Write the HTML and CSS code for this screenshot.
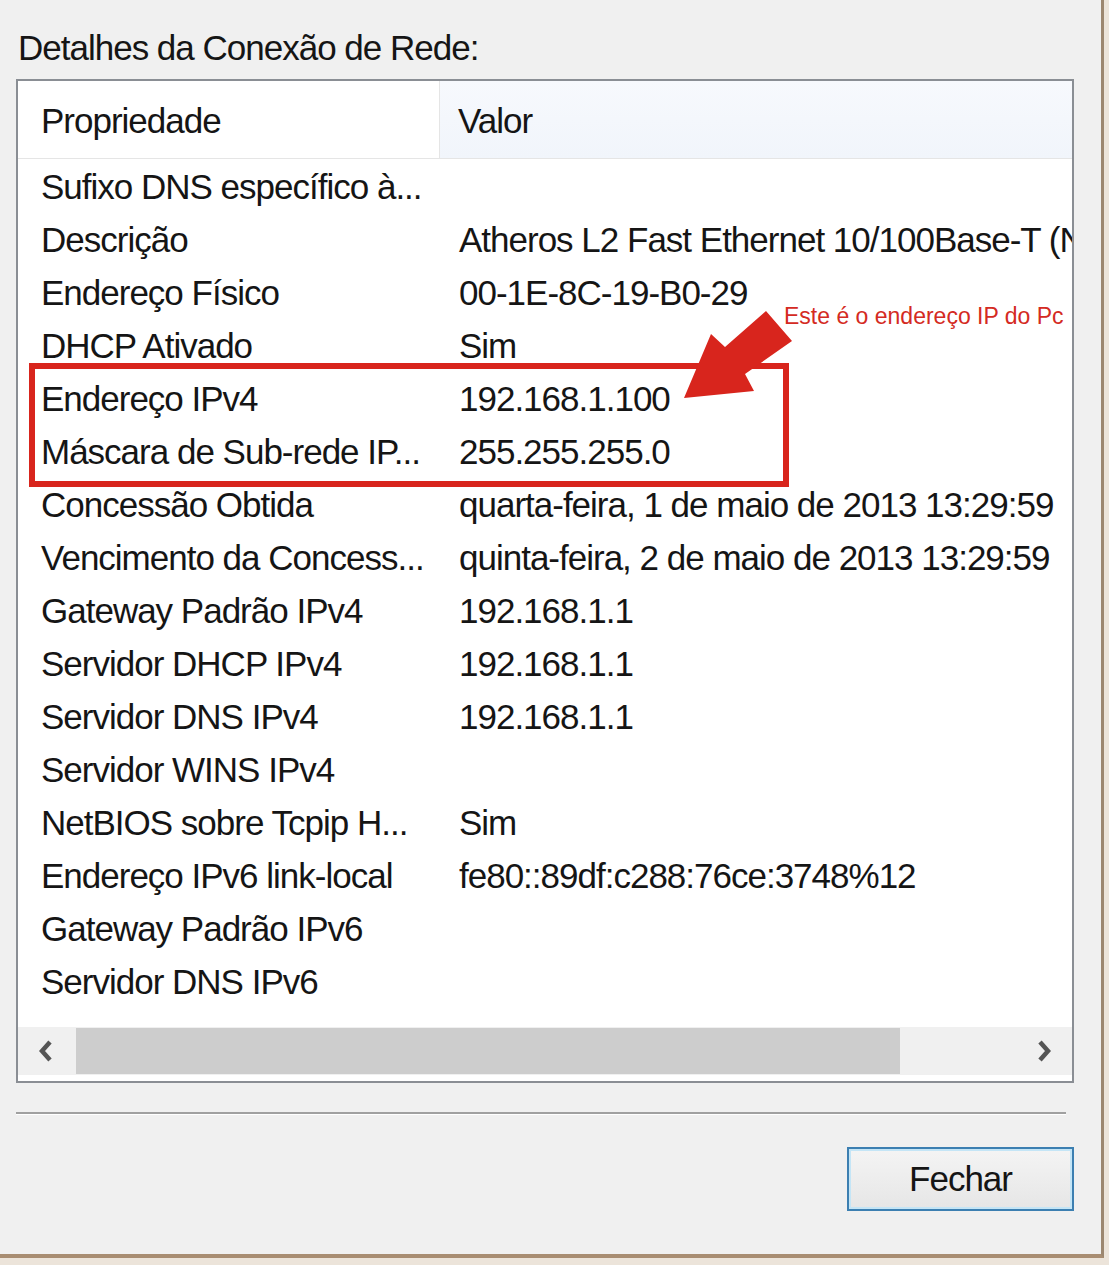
FILE: index.html
```html
<!DOCTYPE html>
<html lang="pt">
<head>
    <meta charset="UTF-8">
    <meta name="viewport" content="width=device-width, initial-scale=1.0">
    <title>Detalhes da Conexão de Rede</title>
    <link rel="stylesheet" href="styles.css">
</head>
<body>
    <div class="dialog">
        <div class="caption">Detalhes da Conexão de Rede:</div>

        <!-- Lista de propriedades -->
        <div class="listview">
            <div class="lv-header">
                <div class="col-prop">Propriedade</div>
                <div class="col-val">Valor</div>
            </div>
            <div class="lv-body">
                <div class="lv-row"><div class="col-prop">Sufixo DNS específico à...</div><div class="col-val"></div></div>
                <div class="lv-row"><div class="col-prop">Descrição</div><div class="col-val">Atheros L2 Fast Ethernet 10/100Base-T (NDIS 6.20)</div></div>
                <div class="lv-row"><div class="col-prop">Endereço Físico</div><div class="col-val">00-1E-8C-19-B0-29</div></div>
                <div class="lv-row"><div class="col-prop">DHCP Ativado</div><div class="col-val">Sim</div></div>
                <div class="lv-row"><div class="col-prop">Endereço IPv4</div><div class="col-val">192.168.1.100</div></div>
                <div class="lv-row"><div class="col-prop">Máscara de Sub-rede IP...</div><div class="col-val">255.255.255.0</div></div>
                <div class="lv-row"><div class="col-prop">Concessão Obtida</div><div class="col-val">quarta-feira, 1 de maio de 2013 13:29:59</div></div>
                <div class="lv-row"><div class="col-prop">Vencimento da Concess...</div><div class="col-val">quinta-feira, 2 de maio de 2013 13:29:59</div></div>
                <div class="lv-row"><div class="col-prop">Gateway Padrão IPv4</div><div class="col-val">192.168.1.1</div></div>
                <div class="lv-row"><div class="col-prop">Servidor DHCP IPv4</div><div class="col-val">192.168.1.1</div></div>
                <div class="lv-row"><div class="col-prop">Servidor DNS IPv4</div><div class="col-val">192.168.1.1</div></div>
                <div class="lv-row"><div class="col-prop">Servidor WINS IPv4</div><div class="col-val"></div></div>
                <div class="lv-row"><div class="col-prop">NetBIOS sobre Tcpip H...</div><div class="col-val">Sim</div></div>
                <div class="lv-row"><div class="col-prop">Endereço IPv6 link-local</div><div class="col-val">fe80::89df:c288:76ce:3748%12</div></div>
                <div class="lv-row"><div class="col-prop">Gateway Padrão IPv6</div><div class="col-val"></div></div>
                <div class="lv-row"><div class="col-prop">Servidor DNS IPv6</div><div class="col-val"></div></div>
            </div>
            <div class="hscroll">
                <div class="sb-btn">
                    <svg width="20" height="26" viewBox="0 0 20 26"><polyline points="14,4 6,13 14,22" fill="none" stroke="#555" stroke-width="4.5" stroke-linejoin="miter"/></svg>
                </div>
                <div class="sb-track"><div class="sb-thumb"></div></div>
                <div class="sb-btn">
                    <svg width="20" height="26" viewBox="0 0 20 26"><polyline points="6,4 14,13 6,22" fill="none" stroke="#555" stroke-width="4.5" stroke-linejoin="miter"/></svg>
                </div>
            </div>
        </div>

        <div class="separator"></div>

        <div class="buttons">
            <button class="btn">Fechar</button>
        </div>

        <!-- Anotação em vermelho -->
        <div class="note-box"></div>
        <svg class="note-arrow" width="120" height="100" viewBox="0 0 120 100">
            <polygon points="4,93 31,29 45,42 86,6 112,36 65,69 74,86" fill="#d8251d"/>
        </svg>
        <div class="note-text">Este é o endereço IP do Pc</div>
    </div>
</body>
</html>
```

FILE: styles.css
```css
body {
    margin: 0;
    background-color: #ece4da;
    font-family: 'Liberation Sans', Arial, sans-serif;
    color: #151515;
}

.dialog {
    position: relative;
    width: 1104px;
    height: 1258px;
    padding-left: 16px;
    box-sizing: border-box;
    background-color: #f0f0f0;
    border-right: 3px solid #9c8770;
    border-bottom: 4px solid #a88d72;
    overflow: hidden;
}

.caption {
    padding-top: 28px;
    padding-left: 2px;
    font-size: 35px;
    line-height: 40px;
    letter-spacing: -1px;
}

.listview {
    margin-top: 11px;
    width: 1058px;
    height: 1004px;
    box-sizing: border-box;
    border: 2px solid #8a8e94;
    background-color: #fff;
    display: flex;
    flex-direction: column;
}

.lv-header,
.lv-row {
    display: flex;
    font-size: 35px;
    letter-spacing: -1px;
    white-space: nowrap;
}

.col-prop {
    width: 422px;
    flex: none;
    padding-left: 23px;
    box-sizing: border-box;
    overflow: hidden;
}

.col-val {
    flex: 1;
    padding-left: 19px;
    overflow: hidden;
}

.lv-header {
    height: 78px;
    line-height: 80px;
    box-sizing: border-box;
    border-bottom: 1px solid #e5e5e5;
}

.lv-header .col-prop {
    border-right: 1px solid #e5e5e5;
    background-color: #fff;
}

.lv-header .col-val {
    padding-left: 18px;
    background: linear-gradient(#f7f9fd, #f1f5fb);
}

.lv-body {
    flex: 1;
    padding-top: 1px;
}

.lv-row {
    height: 53px;
    line-height: 53px;
}

.hscroll {
    display: flex;
    height: 48px;
    margin-bottom: 6px;
    background-color: #f0f0f0;
}

.sb-btn {
    width: 56px;
    display: flex;
    align-items: center;
    justify-content: center;
}

.sb-track {
    flex: 1;
    padding: 1px 0;
}

.sb-thumb {
    width: 824px;
    height: 100%;
    margin-left: 2px;
    background-color: #cdcdcd;
}

.separator {
    margin-top: 29px;
    width: 1050px;
    border-top: 2px solid #a0a0a0;
    border-bottom: 1px solid #fff;
}

.buttons {
    width: 1058px;
    margin-top: 32px;
    display: flex;
    justify-content: flex-end;
}

.btn {
    width: 227px;
    height: 64px;
    border: 2px solid #3c7fb1;
    box-shadow: inset 0 0 0 2px #c4e5f6;
    background: linear-gradient(#f4f4f4, #e6e6e6);
    font-family: 'Liberation Sans', Arial, sans-serif;
    font-size: 35px;
    letter-spacing: -1px;
    color: #151515;
    padding: 0;
}

.note-box {
    position: absolute;
    left: 29px;
    top: 363px;
    width: 760px;
    height: 124px;
    box-sizing: border-box;
    border: 6px solid #d8251d;
}

.note-arrow {
    position: absolute;
    left: 680px;
    top: 305px;
}

.note-text {
    position: absolute;
    left: 784px;
    top: 305px;
    font-size: 23px;
    line-height: 23px;
    color: #d42a22;
    white-space: nowrap;
}
```
